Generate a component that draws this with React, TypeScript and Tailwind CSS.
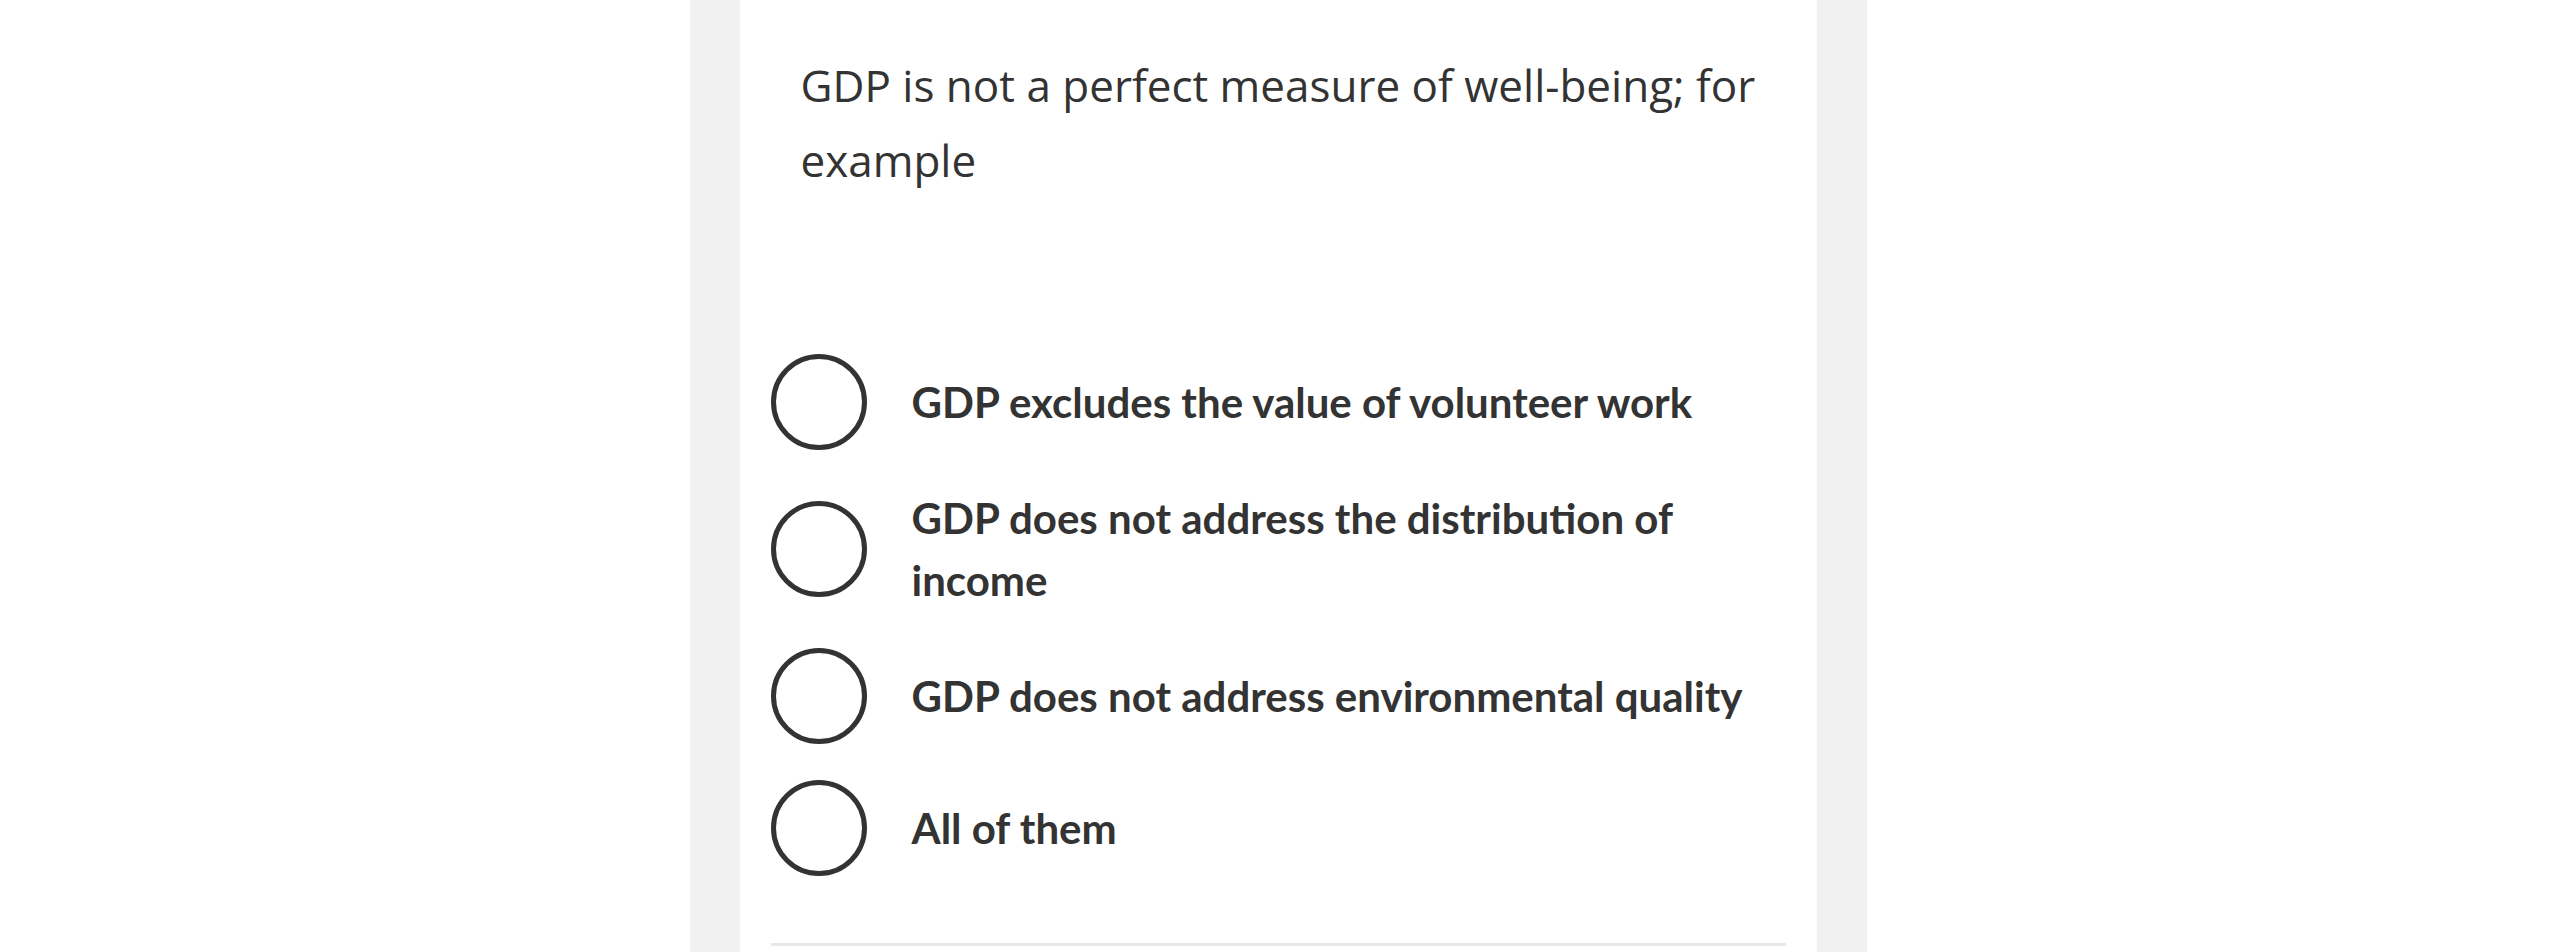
import React from 'react';

const options = [
  'GDP excludes the value of volunteer work',
  'GDP does not address the distribution of income',
  'GDP does not address environmental quality',
  'All of them',
];

export default function App() {
  return (
    <div className="h-[952px] overflow-hidden bg-white flex justify-center">
      <div className="w-[1177px] h-full bg-[#f1f1f1] px-[50px]">
        <div className="h-full bg-white px-[31px] pt-[48px]">
          {/* Question */}
          <p
            className="pl-[30px] pr-[28px] text-[44px] leading-[75px] text-[#333333]"
            style={{ fontFamily: '"Open Sans", sans-serif' }}
          >
            GDP is not a perfect measure of well-being; for example
          </p>

          {/* Options */}
          <div className="mt-[156px] flex flex-col gap-[36px]" style={{ fontFamily: 'Lato, sans-serif' }}>
            {options.map((opt) => (
              <label key={opt} className="flex items-center gap-[45px] cursor-pointer">
                <span className="shrink-0 w-[96px] h-[96px] rounded-full border-[5px] border-[#333333]" />
                <span className="py-[1px] text-[42px] leading-[62px] font-bold text-[#333333]">{opt}</span>
              </label>
            ))}
          </div>

          <div className="mt-[67px] h-[3px] bg-[#e8e8e8]" />
        </div>
      </div>
    </div>
  );
}
